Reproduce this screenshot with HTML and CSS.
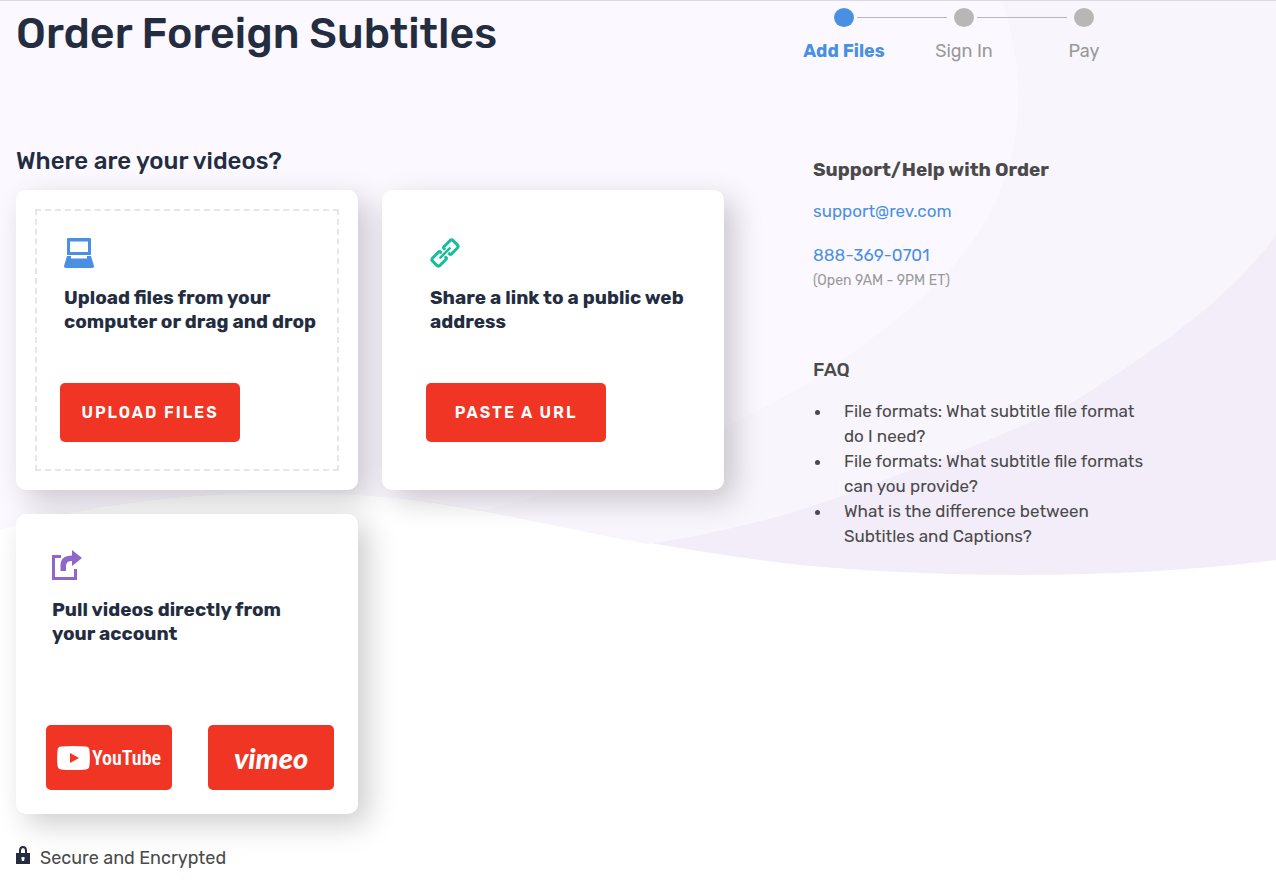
FILE: index.html
```
<!DOCTYPE html>
<html lang="en">
<head>
	<meta charset="utf-8">
	<meta name="viewport" content="width=device-width, initial-scale=1">
	<title>Order Foreign Subtitles</title>
	<link rel="stylesheet" href="styles.css">
</head>
<body>
	<svg class="backdrop" viewBox="0 0 1276 576" preserveAspectRatio="none" aria-hidden="true">
		<path fill="#f3edfa" d="M0 0H1276V561C1130 580 950 580 800 566C620 545 510 512 400 499C260 485 120 497 0 530Z"/>
		<path fill="#f8f5fc" d="M0 0H1276V235C1228 300 1160 347 1079 399C1010 436 930 463 846 495C780 520 710 535 648 545C560 529 490 510 400 499C260 485 120 497 0 530Z"/>
		<path fill="#fbf9ff" d="M0 0H1002C1022 60 1026 130 1000 190C970 270 890 330 800 388C710 440 620 477 485 511C450 505 430 502 400 499C260 485 120 497 0 530Z"/>
	</svg>

	<main class="page">
		<header class="page-head">
			<h1>Order Foreign Subtitles</h1>
			<ol class="steps">
				<li class="step active">Add Files</li>
				<li class="step">Sign In</li>
				<li class="step">Pay</li>
			</ol>
		</header>

		<section class="sources">
			<h2>Where are your videos?</h2>
			<div class="card-grid">
				<div class="card drop-card">
					<div class="drop-zone">
						<svg class="icon" viewBox="0 0 30 30" aria-hidden="true">
							<path fill="#4a90e2" fill-rule="evenodd" d="M4 0H26Q27 0 27 1V17H3V1Q3 0 4 0ZM6 3.500V14H24V3.500Z"/>
							<path fill="#4a90e2" d="M3 18H7V20.500H23V18H27L30 28Q30 30 28.500 30H1.500Q0 30 0 28Z"/>
						</svg>
						<h3>Upload files from your computer or drag and drop</h3>
						<button class="btn" type="button">UPLOAD FILES</button>
					</div>
				</div>
				<div class="card link-card">
					<svg class="icon" viewBox="0 0 30 30" aria-hidden="true">
						<g transform="rotate(-45 15 15)" fill="none" stroke="#1abc9c" stroke-width="3" stroke-linecap="round" stroke-linejoin="round">
							<path d="M12.500 11.500V11Q12.500 9.800 11 9.800H3Q.5 9.800 .5 12V18Q.5 20.200 3 20.200H11Q12.500 20.200 12.500 19V18.500"/>
							<path d="M17.500 11.500V11Q17.500 9.800 19 9.800H27Q29.500 9.800 29.500 12V18Q29.500 20.200 27 20.200H19Q17.500 20.200 17.500 19V18.500"/>
							<path d="M8.500 15H21.500" stroke-width="2.500"/>
						</g>
					</svg>
					<h3>Share a link to a public web address</h3>
					<button class="btn" type="button">PASTE A URL</button>
				</div>
				<div class="card account-card">
					<svg class="icon" viewBox="0 0 30 30" aria-hidden="true">
						<path fill="#8e66cc" d="M0 5H9V8H3V27H22V19H25V30H0Z"/>
						<path fill="#8e66cc" d="M20 0L30 8L20 16V11C15.500 11 14 13 14 17V21H8.500V16C8.500 9 12 5.500 20 5.500Z"/>
					</svg>
					<h3>Pull videos directly from your account</h3>
					<div class="accounts">
						<button class="btn" type="button">
							<svg class="play" viewBox="0 0 33 24" aria-hidden="true">
								<path fill="#fff" d="M4 .6Q16 -.5 29 .6Q32 1 32.400 4Q33.300 12 32.400 20Q32 23 29 23.400Q16 24.500 4 23.400Q1 23 .6 20Q-.3 12 .6 4Q1 1 4 .6Z"/>
								<path fill="#f03524" d="M13 7L22 12L13 17Z"/>
							</svg>
							<span class="youtube">YouTube</span>
						</button>
						<button class="btn" type="button"><span class="vimeo">vimeo</span></button>
					</div>
				</div>
			</div>
			<p class="secure">
				<svg class="lock" viewBox="0 0 14 18" aria-hidden="true">
					<path fill="none" stroke="#232d3f" stroke-width="2" d="M4 8V4.500Q4 1 7 1Q10 1 10 4.500V8"/>
					<path fill="#232d3f" d="M0 7H14V18H0Z"/>
					<path fill="#fff" d="M5.500 11H8.500V13L8 15H6L5.500 13Z"/>
				</svg>
				Secure and Encrypted
			</p>
		</section>

		<aside class="help">
			<h4>Support/Help with Order</h4>
			<p class="email"><a href="mailto:support@rev.com">support@rev.com</a></p>
			<p class="phone"><a href="tel:888-369-0701">888-369-0701</a><small>(Open 9AM - 9PM ET)</small></p>
			<h4 class="faq-title">FAQ</h4>
			<ul class="faq">
				<li>File formats: What subtitle file format do I need?</li>
				<li>File formats: What subtitle file formats can you provide?</li>
				<li>What is the difference between Subtitles and Captions?</li>
			</ul>
		</aside>
	</main>
</body>
</html>
```

FILE: styles.css
```
* {
  box-sizing: border-box;
}

body {
  margin: 0;
  position: relative;
  border-top: 1px solid #d9dbe1;
  background-color: #fff;
  color: #4a4a4a;
  font-family: Rubik, Roboto, sans-serif;
  font-size: 17px;
  line-height: 25px;
}

h1, h2, h3, h4, p, ol, ul {
  margin: 0;
  padding: 0;
}

h1, h2, h3 {
  color: #232d3f;
}

.backdrop {
  position: absolute;
  top: 0;
  left: 0;
  z-index: -1;
  width: 100%;
  height: 574px;
}

.page {
  display: grid;
  grid-template-columns: minmax(0, 708px) 360px;
  column-gap: 60px;
  padding: 0 16px;
}

.page-head {
  display: grid;
  grid-column: 1 / -1;
  grid-template-columns: subgrid;
  height: 147px;
}

h1 {
  font-size: 43px;
  font-weight: 500;
  line-height: 66px;
}

h2 {
  font-size: 24px;
  font-weight: 500;
  line-height: 26px;
  margin-bottom: 16px;
}

h3 {
  font-size: 19px;
  font-weight: 700;
  line-height: 24px;
  margin-top: 18px;
}

h4 {
  font-size: 19px;
  font-weight: 700;
  line-height: 24px;
}

/* order steps */
.steps {
  display: flex;
  list-style: none;
}

.step {
  position: relative;
  flex: 1;
  padding-top: 38px;
  text-align: center;
  font-size: 18px;
  color: #999;
}

.step::before {
  content: "";
  position: absolute;
  top: 7px;
  left: calc(50% - 10px);
  width: 20px;
  height: 19px;
  border-radius: 50%;
  background-color: #b7b7b7;
}

.step + .step::after {
  content: "";
  position: absolute;
  top: 16px;
  right: calc(50% + 17px);
  width: 90px;
  height: 1px;
  background-color: #b7b7b7;
}

.step.active {
  color: #4a90e2;
  font-weight: 700;
}

.step.active::before {
  background-color: #4a90e2;
}

/* cards */
.card-grid {
  display: grid;
  grid-template-columns: 1fr 1fr;
  gap: 24px;
}

.card {
  display: flex;
  flex-direction: column;
  min-height: 300px;
  border-radius: 10px;
  background-color: #fff;
  box-shadow: 10px 10px 30px rgba(0, 0, 0, .2);
}

.drop-card {
  padding: 19px;
}

.drop-zone {
  flex: 1;
  display: flex;
  flex-direction: column;
  border: 2px dashed #e6e6e6;
  padding: 27px 10px 27px 27px;
}

.link-card {
  padding: 48px 24px 48px 48px;
}

.account-card {
  padding: 36px 24px 24px 36px;
}

.account-card h3 {
  margin-right: 24px;
}

.icon {
  width: 30px;
  height: 30px;
  overflow: visible;
}

.btn {
  display: flex;
  align-items: center;
  justify-content: center;
  width: 180px;
  height: 59px;
  margin: auto 0 0 -4px;
  padding: 0;
  border: none;
  border-radius: 5px;
  background-color: #f03524;
  color: #fff;
  font-family: inherit;
  font-size: 16px;
  font-weight: 600;
  letter-spacing: 2px;
  cursor: pointer;
}

.btn:hover {
  background-color: #d92b1b;
}

.accounts {
  display: flex;
  justify-content: space-between;
  margin: auto 0 0 -6px;
}

.accounts .btn {
  width: 126px;
  height: 65px;
  margin: 0;
  gap: 2px;
  letter-spacing: normal;
}

.play {
  width: 33px;
  height: 24px;
}

.youtube {
  font-family: "Roboto Condensed", Roboto, sans-serif;
  font-size: 20px;
  font-weight: 600;
}

.vimeo {
  font-family: Lato, sans-serif;
  font-size: 29px;
  font-style: italic;
  font-weight: 900;
}

.secure {
  display: flex;
  align-items: flex-start;
  gap: 10px;
  margin: 32px 0 16px;
  font-size: 18px;
}

.lock {
  width: 14px;
  height: 18px;
}

/* help column */
.help {
  padding: 10px 0 0 29px;
}

.email {
  margin-top: 17px;
}

.phone {
  margin-top: 19px;
}

a {
  color: #4a90e2;
  text-decoration: none;
}

a:hover {
  text-decoration: underline;
}

small {
  display: block;
  font-size: 14px;
  color: #999;
}

.faq-title {
  margin-top: 65px;
  font-weight: 500;
}

.faq {
  margin-top: 17px;
  padding-left: 19px;
}

.faq li {
  padding-left: 12px;
}
```
